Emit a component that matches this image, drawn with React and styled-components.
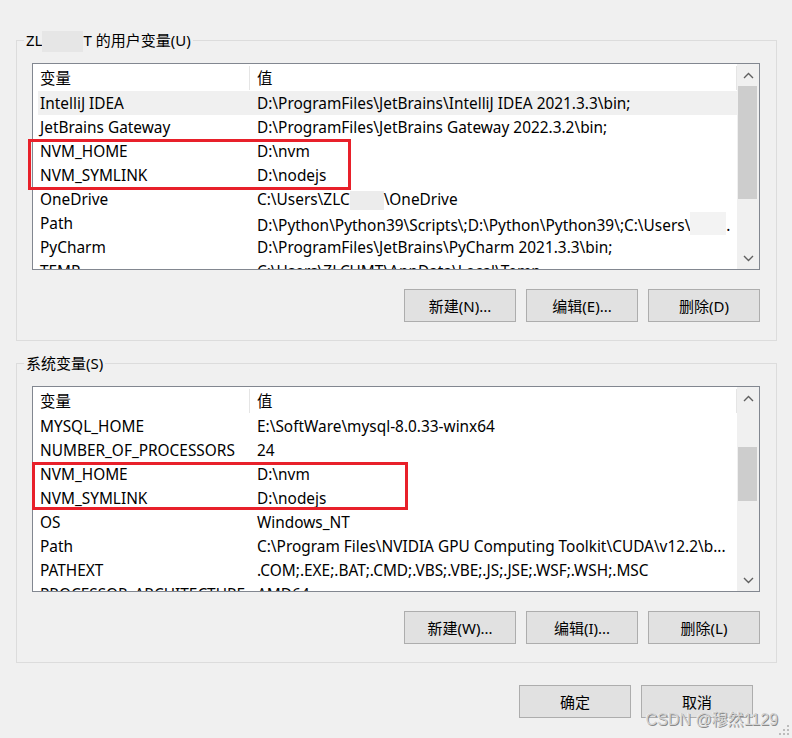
import React from "react";
import styled, { createGlobalStyle } from "styled-components";

const GlobalStyle = createGlobalStyle`
  html, body { margin: 0; padding: 0; background: #f0f0f0; }
  body {
    font-family: "Noto Sans", "Noto Sans CJK SC", sans-serif;
    color: #000;
  }
`;

const Window = styled.div`
  position: relative;
  width: 792px;
  height: 738px;
  box-sizing: border-box;
  padding: 40px 15px 0 16px;
  display: flex;
  flex-direction: column;
  gap: 22px;
  overflow: hidden;
  background: #f0f0f0;
`;

const Group = styled.section`
  position: relative;
  border: 1px solid #dcdcdc;
  padding: 22px 16px 18px 15px;
  display: flex;
  flex-direction: column;
  gap: 19px;
`;

const Legend = styled.div`
  position: absolute;
  top: -11px;
  left: 7px;
  padding: 0 2px;
  background: #f0f0f0;
  font-size: 15px;
  line-height: 20px;
  white-space: nowrap;
`;

const Blur = styled.span`
  display: inline-block;
  width: ${(p) => p.$w}px;
  height: ${(p) => p.$h || 21}px;
  vertical-align: middle;
  background: ${(p) => p.$bg || "#e6e6e6"};
`;

const ListBox = styled.div`
  position: relative;
  height: ${(p) => p.$h || 207}px;
  box-sizing: border-box;
  border: 1px solid #828790;
  background: #fff;
  display: flex;
`;

const ListBody = styled.div`
  flex: 1;
  overflow: hidden;
  display: flex;
  flex-direction: column;
`;

const Header = styled.div`
  height: 27px;
  flex: none;
  display: grid;
  grid-template-columns: 217px 1fr;
  font-size: 15.4px;
`;

const HeadCell = styled.div`
  padding: 1px 0 0 7px;
  border-right: 1px solid #e5e5e5;
  margin: 2px 0;
  line-height: 23px;
  box-sizing: border-box;
`;

const Row = styled.div`
  height: 24px;
  flex: none;
  margin-left: 5px;
  display: grid;
  grid-template-columns: 212px 1fr;
  background: ${(p) => (p.$selected ? "#f0f0f0" : "transparent")};
  font-size: 15.4px;
  line-height: 24px;
  white-space: nowrap;
  overflow: hidden;
`;

const Cell = styled.div`
  padding: 1px 0 0 ${(p) => p.$pad || 2}px;
  overflow: hidden;
  white-space: nowrap;
`;

const Scrollbar = styled.div`
  width: 22px;
  flex: none;
  background: #f0f0f0;
  display: flex;
  flex-direction: column;
`;

const Arrow = styled.div`
  height: 22px;
  flex: none;
  display: flex;
  align-items: center;
  justify-content: center;
`;

const Track = styled.div`
  flex: 1;
  position: relative;
`;

const Thumb = styled.div`
  position: absolute;
  left: 1px;
  right: 2px;
  background: #cdcdcd;
`;

const ButtonRow = styled.div`
  display: flex;
  justify-content: flex-end;
  gap: 10px;
`;

const Button = styled.button`
  width: 112px;
  height: 33px;
  box-sizing: border-box;
  border: 1px solid #adadad;
  background: #e1e1e1;
  font-family: "Noto Sans", "Noto Sans CJK SC", sans-serif;
  font-size: 15px;
  color: #000;
  padding: 0;
  cursor: default;
`;

const Footer = styled.div`
  display: flex;
  justify-content: flex-end;
  gap: 10px;
  padding-right: 24px;
`;

const Highlight = styled.div`
  position: absolute;
  border: 3px solid #e8202a;
  pointer-events: none;
`;

const Watermark = styled.div`
  position: absolute;
  right: 14px;
  bottom: 8px;
  font-family: "Liberation Sans", "Noto Sans CJK SC", sans-serif;
  font-size: 16px;
  color: #d2d2d2;
  text-shadow: 1px 1px 0 #8a8a8a, -0.5px -0.5px 0 #fff;
  white-space: nowrap;
`;

const Grip = styled.svg`
  position: absolute;
  right: 2px;
  bottom: 2px;
`;

const Chevron = ({ up }) => (
  <svg width="11" height="7" viewBox="0 0 11 7">
    <path
      d={up ? "M1 6 L5.5 1.5 L10 6" : "M1 1 L5.5 5.5 L10 1"}
      fill="none"
      stroke="#606060"
      strokeWidth="1.4"
    />
  </svg>
);

const userRows = [
  ["IntelliJ IDEA", "D:\\ProgramFiles\\JetBrains\\IntelliJ IDEA 2021.3.3\\bin;", true],
  ["JetBrains Gateway", "D:\\ProgramFiles\\JetBrains Gateway 2022.3.2\\bin;"],
  ["NVM_HOME", "D:\\nvm"],
  ["NVM_SYMLINK", "D:\\nodejs"],
  ["OneDrive", <>C:\Users\ZLC<Blur $w={34} $h={19} $bg="#ececec" />\OneDrive</>],
  ["Path", <>D:\Python\Python39\Scripts\;D:\Python\Python39\;C:\Users\<Blur $w={36} $h={29} $bg="#f3f3f3" />.</>],
  ["PyCharm", "D:\\ProgramFiles\\JetBrains\\PyCharm 2021.3.3\\bin;"],
  ["TEMP", "C:\\Users\\ZLCUMT\\AppData\\Local\\Temp"],
];

const sysRows = [
  ["MYSQL_HOME", "E:\\SoftWare\\mysql-8.0.33-winx64"],
  ["NUMBER_OF_PROCESSORS", "24"],
  ["NVM_HOME", "D:\\nvm"],
  ["NVM_SYMLINK", "D:\\nodejs"],
  ["OS", "Windows_NT"],
  ["Path", "C:\\Program Files\\NVIDIA GPU Computing Toolkit\\CUDA\\v12.2\\b..."],
  ["PATHEXT", ".COM;.EXE;.BAT;.CMD;.VBS;.VBE;.JS;.JSE;.WSF;.WSH;.MSC"],
  ["PROCESSOR_ARCHITECTURE", "AMD64"],
];

function VarList({ rows, height, thumbTop, thumbHeight, box }) {
  return (
    <ListBox $h={height}>
      <ListBody>
        <Header>
          <HeadCell>变量</HeadCell>
          <HeadCell>值</HeadCell>
        </Header>
        {rows.map(([name, value, sel], i) => (
          <Row key={i} $selected={sel}>
            <Cell>{name}</Cell>
            <Cell $pad={7}>{value}</Cell>
          </Row>
        ))}
      </ListBody>
      <Scrollbar>
        <Arrow><Chevron up /></Arrow>
        <Track>
          <Thumb style={{ top: thumbTop, height: thumbHeight }} />
        </Track>
        <Arrow><Chevron /></Arrow>
      </Scrollbar>
      <Highlight style={box} />
    </ListBox>
  );
}

export default function App() {
  return (
    <>
      <GlobalStyle />
      <Window>
        <Group>
          <Legend>
            ZL<Blur $w={41} $h={21} />T 的用户变量(U)
          </Legend>
          <VarList
            rows={userRows}
            height={207}
            thumbTop={0}
            thumbHeight={113}
            box={{ left: -5, top: 75, width: 317, height: 45 }}
          />
          <ButtonRow>
            <Button>新建(N)...</Button>
            <Button>编辑(E)...</Button>
            <Button>删除(D)</Button>
          </ButtonRow>
        </Group>
        <Group>
          <Legend>系统变量(S)</Legend>
          <VarList
            rows={sysRows}
            height={206}
            thumbTop={38}
            thumbHeight={54}
            box={{ left: -1, top: 75, width: 370, height: 42 }}
          />
          <ButtonRow>
            <Button>新建(W)...</Button>
            <Button>编辑(I)...</Button>
            <Button>删除(L)</Button>
          </ButtonRow>
        </Group>
        <Footer>
          <Button>确定</Button>
          <Button>取消</Button>
        </Footer>
        <Watermark>CSDN @穆然1129</Watermark>
        <Grip width="12" height="12" viewBox="0 0 12 12">
          {[[9, 1], [9, 5], [5, 5], [9, 9], [5, 9], [1, 9]].map(([x, y], i) => (
            <rect key={i} x={x} y={y} width="2" height="2" fill="#bcbcbc" />
          ))}
        </Grip>
      </Window>
    </>
  );
}
